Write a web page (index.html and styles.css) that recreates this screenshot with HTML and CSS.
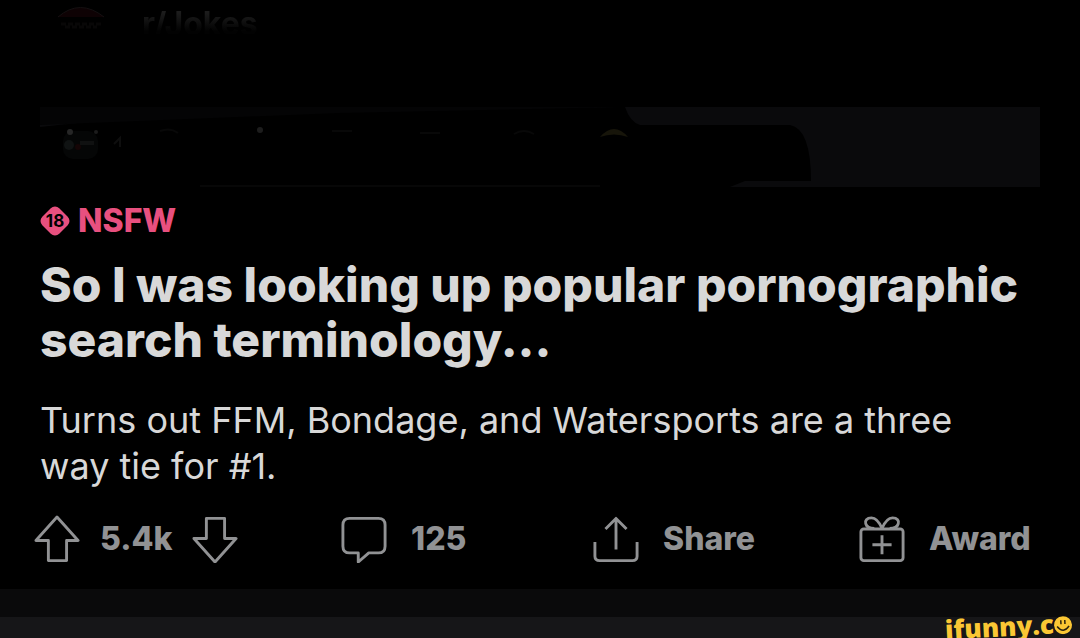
FILE: index.html
```html
<!DOCTYPE html>
<html lang="en">
  <head>
    <meta charset="UTF-8" />
    <meta name="viewport" content="width=device-width, initial-scale=1.0" />
    <title>r/Jokes</title>
    <link rel="stylesheet" href="styles.css" />
  </head>
  <body>
    <article class="post">
      <header class="post-header">
        <svg class="avatar" viewBox="0 0 50 50" aria-hidden="true">
          <path d="M2 11Q24 -8 48 11" fill="#0e0204" stroke="#141011" stroke-width="1" />
          <path d="M5 18h40M9 21h32" stroke="#080707" stroke-width="3" stroke-dasharray="5 2" />
        </svg>
        <a class="subreddit" href="#">r/Jokes</a>
      </header>

      <div class="awards">
        <svg class="awards-cover" viewBox="0 0 1000 80" preserveAspectRatio="none" aria-hidden="true">
          <path d="M0 20Q90 10 200 4L585 0Q590 15 600 18H750Q771 22 771 74H705L690 80H0Z" fill="#000" />
          <path d="M0 0H585L300 6L0 18Z" fill="#040405" />
          <path d="M160 79H560" stroke="#070707" stroke-width="2" />
        </svg>
        <svg class="award-icons" viewBox="0 0 1000 80" preserveAspectRatio="xMinYMin meet" aria-hidden="true">
          <rect x="23" y="24" width="35" height="28" rx="10" fill="#050606" />
          <circle cx="30" cy="25" r="3" fill="#262626" />
          <circle cx="56" cy="25" r="2" fill="#1c1c1c" />
          <circle cx="29" cy="38" r="5" fill="#101313" />
          <circle cx="38" cy="40" r="3" fill="#150506" />
          <path d="M40 36h14" stroke="#101111" stroke-width="4" />
          <path d="M74 37l6-6v9" stroke="#0e0e0e" stroke-width="2" fill="none" />
          <path d="M120 24q10-4 18 2M292 24h20M380 26h20M474 27q10-6 20 0" stroke="#080808" stroke-width="2" fill="none" />
          <circle cx="220" cy="23" r="3" fill="#1d1d1d" />
          <path d="M560 30Q574 14 588 30Q574 25 560 30Z" fill="#17150a" />
        </svg>
      </div>

      <div class="nsfw">
        <svg class="nsfw-icon" viewBox="0 0 30 30" aria-hidden="true">
          <rect x="3" y="3" width="24" height="24" rx="6" transform="rotate(45 15 15)" fill="#e8507f" />
          <text x="15" y="21" text-anchor="middle" class="nsfw-age">18</text>
        </svg>
        <span>NSFW</span>
      </div>

      <h1 class="title">So I was looking up popular pornographic search terminology...</h1>
      <p class="text">Turns out FFM, Bondage, and Watersports are a three way tie for #1.</p>

      <footer class="actions">
        <div class="votes">
          <button type="button" aria-label="Upvote">
            <svg class="icon" viewBox="0 0 48 50">
              <path d="M24 2L46 26.500H34V47.500H15V26.500H2Z" />
            </svg>
          </button>
          <span>5.4k</span>
          <button type="button" aria-label="Downvote">
            <svg class="icon" viewBox="0 0 48 50">
              <path d="M24 49L46 24.500H34V3.500H15V24.500H2Z" />
            </svg>
          </button>
        </div>
        <button type="button" aria-label="Comments, 125">
          <svg class="icon" viewBox="0 0 48 50">
            <path d="M9 3.500H39Q46 3.500 46 10.500V32.500Q46 39.500 39 39.500H29L18 49V39.500H9Q2 39.500 2 32.500V10.500Q2 3.500 9 3.500Z" />
          </svg>
          <span>125</span>
        </button>
        <button type="button">
          <svg class="icon" viewBox="0 0 48 50">
            <path d="M2 28V43Q2 47.500 7 47.500H41Q46 47.500 46 43V28M24 36V4M13 14.500L24 3.500L35 14.500" />
          </svg>
          <span>Share</span>
        </button>
        <button type="button">
          <svg class="icon" viewBox="0 0 48 50">
            <rect x="2" y="14.500" width="44" height="33" rx="3" />
            <path d="M24 21V41M14 31H34" />
            <path d="M24 14C21 7 17 3 13 3C8 3 6 6 7 9C8 13 13 14 16 14M24 14C27 7 31 3 35 3C40 3 42 6 41 9C40 13 35 14 32 14" />
          </svg>
          <span>Award</span>
        </button>
      </footer>
    </article>

    <div class="divider"></div>

    <div class="watermark">
      <span>ifunny.c</span>
      <svg class="smiley" viewBox="0 0 18 18" aria-hidden="true">
        <circle cx="9" cy="9" r="9" fill="#fbc734" />
        <path d="M7 4v4M11 4v4M3 10Q9 18 15 10" stroke="#2b220c" stroke-width="1.500" fill="none" />
      </svg>
    </div>
  </body>
</html>
```
FILE: styles.css
```css
* {
  box-sizing: border-box;
}

body {
  position: relative;
  min-height: 100vh;
  margin: 0;
  overflow: hidden;
  background-color: #161618;
  color: #d8d8d8;
  font-family: Inter, "Liberation Sans", sans-serif;
}

.post {
  padding: 0 40px 26px;
  background-color: #000;
}

.post-header {
  display: flex;
  gap: 36px;
  height: 107px;
  padding: 6px 16px;
}

.avatar {
  width: 50px;
  height: 50px;
}

.subreddit {
  height: 28px;
  background: linear-gradient(#1c1c1c 25%, #020202 90%);
  background-clip: text;
  color: transparent;
  font-size: 32px;
  font-weight: 700;
  line-height: 36px;
  text-decoration: none;
}

.awards {
  display: grid;
  height: 80px;
  background-color: #0a0a0c;
}

.awards svg {
  grid-area: 1 / 1;
  width: 100%;
  height: 80px;
}

.nsfw {
  display: flex;
  align-items: center;
  gap: 8px;
  margin-top: 16px;
  color: #e8507f;
  font-size: 32px;
  font-weight: 800;
  line-height: 36px;
}

.nsfw-icon {
  width: 30px;
  height: 30px;
}

.nsfw-age {
  fill: #000;
  font-size: 17px;
  font-weight: 700;
}

.title {
  margin: 18px 0 0;
  font-size: 48px;
  font-weight: 800;
  line-height: 55px;
}

.text {
  margin: 30px 0 0;
  padding-right: 40px;
  font-size: 36px;
  font-weight: 400;
  line-height: 46px;
}

.actions {
  display: grid;
  grid-template-columns: 307fr 252fr 266fr 187fr;
  margin: 26px -6px 0;
  color: #919294;
  font-size: 32px;
  font-weight: 800;
  line-height: 48px;
}

.actions button,
.votes {
  display: flex;
  align-items: center;
  justify-content: flex-start;
}

.votes {
  gap: 20px;
}

.actions button {
  gap: 24px;
  padding: 0;
  border: none;
  background: none;
  color: inherit;
  font: inherit;
  cursor: pointer;
}

.icon {
  flex: none;
  width: 46px;
  height: 48px;
  fill: none;
  stroke: #919294;
  stroke-width: 3;
  stroke-linejoin: round;
}

.divider {
  height: 28px;
  background-color: #0a0a0b;
}

.watermark {
  position: absolute;
  right: 8px;
  bottom: -4px;
  display: flex;
  align-items: center;
  color: #fbc734;
  font-family: "Open Sans", sans-serif;
  font-size: 26px;
  font-weight: 800;
  line-height: 32px;
  transform: rotate(-3deg);
}

.smiley {
  width: 18px;
  height: 18px;
  margin-top: 4px;
}
```
